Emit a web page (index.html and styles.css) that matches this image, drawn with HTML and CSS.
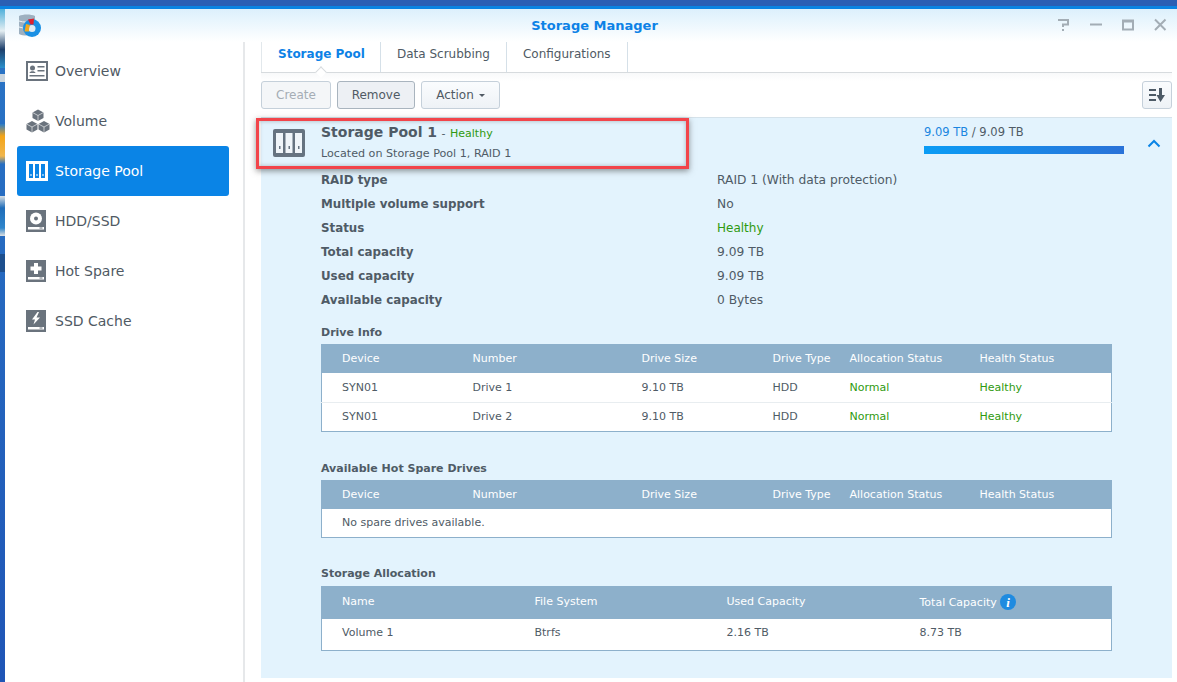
FILE: index.html
```html
<!DOCTYPE html>
<html lang="en">
<head>
<meta charset="utf-8">
<title>Storage Manager</title>
<link rel="stylesheet" href="styles.css">
</head>
<body>
<div class="desktop">
  <span class="sliver s1"></span><span class="sliver s2"></span><span class="sliver s3"></span><span class="sliver s4"></span><span class="sliver s5"></span>
</div>
<div class="window">
  <header class="titlebar">
    <svg class="app-icon" width="24" height="24" viewBox="0 0 24 24">
      <path d="M1 2c4-2 12-2 16 0v18c-4 2-12 2-16 0z" fill="#9db0c0"/>
      <path d="M1 7c4 1.500 12 1.500 16 0M1 13c4 1.500 12 1.500 16 0" fill="none" stroke="#eef3f6" stroke-width="1"/>
      <circle cx="14" cy="14" r="9" fill="#1a90e4"/>
      <circle cx="14" cy="14.500" r="3.500" fill="#dfeaf2"/>
      <path d="M6.500 17.500 L8 10 L12 11 L11 15 L11 17.500z" fill="#f2a81d"/>
      <path d="M10 5.500 L16 4.500 L15.500 10.500 L12.500 10.500z" fill="#e0202c"/>
    </svg>
    <h1 class="app-title">Storage Manager</h1>
    <div class="win-controls">
      <svg width="14" height="14" viewBox="0 0 14 14"><path d="M1 2h10v4.500H6v2.500M6 11v2" fill="none" stroke="#a3adb5" stroke-width="2"/></svg>
      <svg width="14" height="14" viewBox="0 0 14 14"><path d="M1 6.500h12" stroke="#a3adb5" stroke-width="2"/></svg>
      <svg width="14" height="14" viewBox="0 0 14 14"><path d="M2 2.500h10v9H2z" fill="none" stroke="#a3adb5" stroke-width="2"/><path d="M1 3.500h12" stroke="#a3adb5" stroke-width="2"/></svg>
      <svg width="14" height="14" viewBox="0 0 14 14"><path d="M2 1.500l10.500 10.500M12.500 1.500L2 12" stroke="#a3adb5" stroke-width="2"/></svg>
    </div>
  </header>
  <div class="body">
    <nav class="sidebar">
      <a class="nav-item"><svg class="nav-icon" width="22" height="20" viewBox="0 0 22 20"><rect width="22" height="20" fill="#6a737d"/><rect x="2" y="2" width="18" height="16" fill="#fff"/><circle cx="6.500" cy="7" r="2.500" fill="#6a737d"/><path d="M3.500 12c0-2.500 6-2.500 6 0zM11.500 5h7v1.500h-7zM11.500 9h7v1.500h-7zM3.500 14h15v1.500h-15z" fill="#6a737d"/></svg><span>Overview</span></a>
      <a class="nav-item"><svg class="nav-icon" width="24" height="24" viewBox="0 0 24 24"><g fill="#6a737d"><path d="M12 .5l5.500 3V9L12 12 6.500 9V3.500z"/><path d="M6 12l5.500 3v5.500L6 23.500 .5 20.500V15z"/><path d="M18 12l5.500 3v5.500L18 23.500l-5.500-3V15z"/></g><path d="M6.500 3.500L12 6.500l5.500-3M12 6.500V12M.5 15L6 18l5.500-3M6 18v5.500M12.500 15l5.500 3 5.500-3M18 18v5.500" fill="none" stroke="#fff" stroke-width=".6"/></svg><span>Volume</span></a>
      <a class="nav-item active"><svg class="nav-icon" width="22" height="20" viewBox="0 0 22 20"><rect width="22" height="20" fill="#fff"/><path d="M3 3h4v14H3zM9 3h4v14H9zM15 3h4v14h-4z" fill="#0a84e6"/><path d="M4.500 13h1v2h-1zM10.500 13h1v2h-1zM16.500 13h1v2h-1z" fill="#fff"/></svg><span>Storage Pool</span></a>
      <a class="nav-item"><svg class="nav-icon" width="20" height="22" viewBox="0 0 20 22"><rect width="20" height="22" fill="#6a737d"/><circle cx="10" cy="8.500" r="6" fill="#fff"/><circle cx="10" cy="8.500" r="2" fill="#6a737d"/><path d="M2 17h16v2.500H2z" fill="#fff"/><path d="M13.500 17.500h3v1h-3z" fill="#6a737d"/></svg><span>HDD/SSD</span></a>
      <a class="nav-item"><svg class="nav-icon" width="20" height="22" viewBox="0 0 20 22"><rect width="20" height="22" fill="#6a737d"/><path d="M8 3h4v3.500h3.500v4H12V14H8v-3.500H4.500v-4H8z" fill="#fff"/><path d="M2 17h16v2.500H2z" fill="#fff"/><path d="M13.500 17.500h3v1h-3z" fill="#6a737d"/></svg><span>Hot Spare</span></a>
      <a class="nav-item"><svg class="nav-icon" width="20" height="22" viewBox="0 0 20 22"><rect width="20" height="22" fill="#6a737d"/><path d="M11.500 2L6 9.500h3L7.500 14.500 14 7.500h-3.500L13 2z" fill="#fff"/><path d="M2 17h16v2.500H2z" fill="#fff"/><path d="M13.500 17.500h3v1h-3z" fill="#6a737d"/></svg><span>SSD Cache</span></a>
    </nav>
    <main class="main">
      <div class="tabs">
        <a class="tab current">Storage Pool</a>
        <a class="tab">Data Scrubbing</a>
        <a class="tab">Configurations</a>
      </div>
      <div class="toolbar">
        <button class="btn disabled">Create</button>
        <button class="btn dark">Remove</button>
        <button class="btn action">Action<i class="caret"></i></button>
        <button class="btn sort"><svg width="16" height="14" viewBox="0 0 16 14"><path d="M0 1h7v2H0zM0 6h7v2H0zM0 11h7v2H0z" fill="#4d5a66"/><path d="M10 0h3v7h3l-4.500 7L7.500 7H10z" fill="#4d5a66"/></svg></button>
      </div>
      <section class="panel">
        <div class="pool-head">
          <svg class="pool-icon" width="32" height="28" viewBox="0 0 32 28"><rect width="32" height="28" rx="2" fill="#667380"/><path d="M3 4h7v20H3zM12.500 4h7v20h-7zM22 4h7v20h-7z" fill="#f0f5f9"/><path d="M6 17h1.500v3H6zM15.500 17H17v3h-1.500zM25 17h1.500v3H25z" fill="#667380"/></svg>
          <div class="pool-text">
            <div class="pool-name"><strong>Storage Pool 1</strong> <span class="dash">-</span> <span class="ok">Healthy</span></div>
            <div class="pool-loc">Located on Storage Pool 1, RAID 1</div>
          </div>
          <div class="usage">
            <div class="usage-text"><span class="blue">9.09 TB</span> / 9.09 TB</div>
            <div class="bar"></div>
          </div>
          <svg class="chev" width="14" height="9" viewBox="0 0 14 9"><path d="M1.500 7.500L7 2l5.500 5.500" fill="none" stroke="#0a84e6" stroke-width="2"/></svg>
        </div>
        <dl class="props">
          <dt>RAID type</dt><dd>RAID 1 (With data protection)</dd>
          <dt>Multiple volume support</dt><dd>No</dd>
          <dt>Status</dt><dd class="ok status">Healthy</dd>
          <dt>Total capacity</dt><dd>9.09 TB</dd>
          <dt>Used capacity</dt><dd>9.09 TB</dd>
          <dt>Available capacity</dt><dd>0 Bytes</dd>
        </dl>
        <h2 class="sec sec-first">Drive Info</h2>
        <table class="grid drives">
          <thead><tr><th>Device</th><th>Number</th><th>Drive Size</th><th>Drive Type</th><th>Allocation Status</th><th>Health Status</th></tr></thead>
          <tbody>
            <tr><td>SYN01</td><td>Drive 1</td><td>9.10 TB</td><td>HDD</td><td class="ok">Normal</td><td class="ok">Healthy</td></tr>
            <tr><td>SYN01</td><td>Drive 2</td><td>9.10 TB</td><td>HDD</td><td class="ok">Normal</td><td class="ok">Healthy</td></tr>
          </tbody>
        </table>
        <h2 class="sec sec-spare">Available Hot Spare Drives</h2>
        <table class="grid drives">
          <thead><tr><th>Device</th><th>Number</th><th>Drive Size</th><th>Drive Type</th><th>Allocation Status</th><th>Health Status</th></tr></thead>
          <tbody><tr><td colspan="6">No spare drives available.</td></tr></tbody>
        </table>
        <h2 class="sec sec-alloc">Storage Allocation</h2>
        <table class="grid alloc">
          <thead><tr><th>Name</th><th>File System</th><th>Used Capacity</th><th><span class="with-info">Total Capacity <svg width="16" height="16" viewBox="0 0 16 16"><circle cx="8" cy="8" r="8" fill="#1f8be0"/><text x="8" y="12.500" text-anchor="middle" class="info-i">i</text></svg></span></th></tr></thead>
          <tbody><tr><td>Volume 1</td><td>Btrfs</td><td>2.16 TB</td><td>8.73 TB</td></tr></tbody>
        </table>
      </section>
      <div class="highlight"></div>
    </main>
  </div>
</div>
</body>
</html>
```
FILE: styles.css
```css
* { box-sizing: border-box; }
html, body { margin: 0; height: 100%; }
body {
  display: flex;
  height: 682px;
  overflow: hidden;
  background: #fff;
  font-family: "DejaVu Sans", Verdana, sans-serif;
  font-size: 11px;
  color: #4f5b66;
  position: relative;
}
.desktop {
  width: 5px;
  flex: none;
  display: flex;
  flex-direction: column;
  background: linear-gradient(#2a76c6, #1f55b6);
}
.sliver { display: block; width: 5px; }
.s1 { height: 62px; margin-top: 6px; background: linear-gradient(#3ba8d8, #e4eef2 40%, #1d3f6a 70%, #2a90cc); }
.s2 { height: 8px; margin-top: 6px; background: #c8d4de; }
.s3 { height: 40px; margin-top: 42px; background: linear-gradient(#2a7cc8, #f3a418 30%, #f1b64c 80%, #2a70c0); }
.s4 { height: 40px; margin-top: 32px; background: linear-gradient(#d8dfe4, #1f6cb8 30%, #2f86cc 80%, #e0e0e0); }
.s5 { height: 18px; margin-top: 18px; background: #1d4f8e; }
.window { flex: 1; min-width: 0; display: flex; flex-direction: column; }
.window::before {
  content: "";
  display: block;
  height: 9px;
  flex: none;
  background: linear-gradient(#2a5fb4 0 6px, #0a84e2 6px 9px);
  margin-left: -5px;
}
.titlebar {
  height: 33px;
  flex: none;
  display: flex;
  align-items: center;
  justify-content: center;
  position: relative;
  background: linear-gradient(#dcf0fc, #fff);
}
.app-icon { position: absolute; left: 13px; top: 5px; }
.app-title { margin: 0 0 0 7px; font-size: 13px; font-weight: bold; color: #0d82e6; }
.win-controls {
  position: absolute;
  right: 10px;
  top: 9px;
  display: flex;
  gap: 18px;
}
.body { flex: 1; min-height: 0; display: flex; }
.sidebar {
  width: 240px;
  flex: none;
  border-right: 2px solid #e6e8ea;
  padding: 4px 14px 0 12px;
  display: flex;
  flex-direction: column;
}
.nav-item {
  height: 50px;
  display: flex;
  align-items: center;
  font-size: 14px;
  color: #505a64;
  border-radius: 3px;
  padding-left: 38px;
  position: relative;
}
.nav-icon { position: absolute; left: 9px; top: 50%; transform: translateY(-50%); }
.nav-item.active { background: #0a84e6; color: #fff; }
.main { flex: 1; min-width: 0; padding-left: 16px; padding-right: 5px; position: relative; display: flex; flex-direction: column; }
.tabs {
  height: 31px;
  flex: none;
  display: flex;
  border-bottom: 1px solid #d7dbde;
  position: relative;
}
.tab {
  height: 30px;
  padding: 4px 16px 0;
  line-height: 16px;
  font-size: 12px;
  color: #505a64;
  border-right: 1px solid #d5e0e8;
  position: relative;
}
.tab.current {
  color: #0d82e6;
  font-weight: bold;
  padding-right: 15px;
  border-left: 1px solid #e2e8ec;
}
.tab.current::after {
  content: "";
  position: absolute;
  left: 50%;
  bottom: -4px;
  width: 7px;
  height: 7px;
  margin-left: -4px;
  background: #fff;
  border-left: 1px solid #d7dbde;
  border-top: 1px solid #d7dbde;
  transform: rotate(45deg);
}
.toolbar {
  height: 44px;
  flex: none;
  display: flex;
  gap: 6px;
  padding-top: 8px;
  background: linear-gradient(#f8f9fa, #fff 8px);
}
.btn {
  height: 28px;
  padding: 0;
  font: inherit;
  font-size: 12px;
  color: #505a64;
  border: 1px solid #c5d0da;
  border-radius: 3px;
  background: linear-gradient(#fafcfe, #eef2f6);
}
.btn.disabled { color: #a5adb5; background: #f4f6f8; width: 70px; }
.btn.dark { border-color: #a9b4be; background: #edf0f4; width: 78px; }
.btn.action { width: 79px; }
.caret {
  display: inline-block;
  margin-left: 5px;
  vertical-align: middle;
  border: 3px solid transparent;
  border-top-color: #505a64;
  border-bottom-width: 0;
}
.btn.sort { margin-left: auto; width: 30px; display: flex; align-items: center; justify-content: center; }
.panel {
  flex: 1;
  margin-bottom: 4px;
  background: #e3f3fd;
  border-top: 1px solid #d5e2ea;
  padding: 0 60px;
  position: relative;
}
.pool-head { height: 50px; position: relative; }
.pool-icon { position: absolute; left: -48px; top: 11px; }
.pool-text { padding-top: 5px; }
.pool-name { line-height: 18px; font-size: 11px; word-spacing: 1px; }
.pool-name strong { font-size: 14px; color: #4f5b66; word-spacing: 0; }
.dash { color: #4f5b66; }
.ok { color: #2f9a10; }
.pool-loc { margin-top: 3px; line-height: 16px; font-size: 11.15px; }
.usage { position: absolute; left: 603px; top: 6px; width: 200px; }
.usage-text { line-height: 16px; font-size: 11.5px; }
.blue { color: #1a86e0; }
.bar { height: 8px; margin-top: 6px; background: linear-gradient(90deg, #0a9cf5, #2a72d8); }
.chev { position: absolute; left: 826px; top: 21px; }
.props { margin: 0; display: grid; grid-template-columns: 396px 1fr; grid-auto-rows: 24px; line-height: 24px; }
.props dt { font-weight: bold; font-size: 11.85px; }
.props dd { margin: 0; font-size: 12.25px; }
.props dd.status { font-size: 12px; }
.sec { margin: 0; font-size: 11px; font-weight: bold; line-height: 14px; color: #4f5b66; }
.sec-first { margin-top: 14px; margin-bottom: 4px; }
.sec-spare { margin-top: 30px; margin-bottom: 4px; }
.sec-alloc { margin-top: 29px; margin-bottom: 5px; }
.grid {
  width: 791px;
  border-collapse: collapse;
  table-layout: fixed;
  background: #fff;
  border: 1px solid #8db0cb;
  border-top: 0;
}
.grid th {
  height: 29px;
  padding: 0 0 0 20px;
  text-align: left;
  font-weight: normal;
  white-space: nowrap;
  background: #8db0cb;
  color: #fff;
}
.grid td { height: 29px; padding: 0 0 0 20px; }
.grid tbody tr + tr td { border-top: 1px solid #e8edf0; }
.drives th:nth-child(1) { width: 131px; }
.drives th:nth-child(2) { width: 169px; }
.drives th:nth-child(3) { width: 131px; }
.drives th:nth-child(4) { width: 77px; }
.drives th:nth-child(5) { width: 130px; }
.alloc th { width: 192px; height: 33px; padding-bottom: 3px; }
.alloc th:nth-child(1), .alloc th:nth-child(3) { width: 193px; }
.alloc th:last-child { width: auto; padding-bottom: 1px; }
.alloc td { height: 31px; padding-bottom: 3px; }
.with-info { display: inline-flex; align-items: center; gap: 3px; }
.info-i { font-family: "Liberation Serif", serif; font-weight: bold; font-style: italic; font-size: 13px; fill: #fff; }
.highlight {
  position: absolute;
  left: 11px;
  top: 76px;
  width: 433px;
  height: 51px;
  border: 3px solid #f2444a;
  box-shadow: 0 2px 6px rgba(60, 60, 60, .55), inset 0 0 4px rgba(60, 60, 60, .35);
}
```
